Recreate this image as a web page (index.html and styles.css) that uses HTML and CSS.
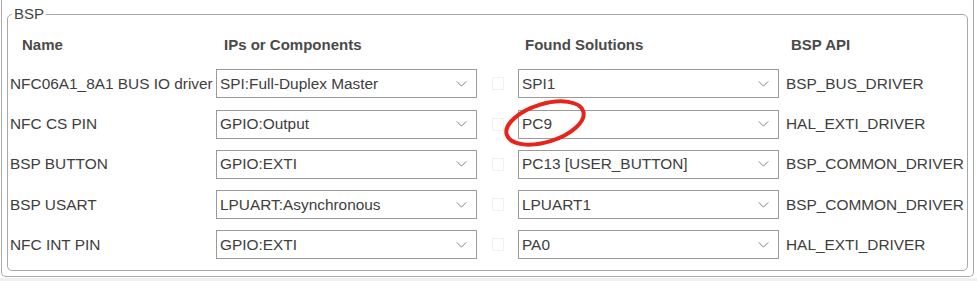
FILE: index.html
```html
<!DOCTYPE html>
<html>
<head>
<meta charset="utf-8">
<link rel="stylesheet" href="styles.css">
</head>
<body>
<div class="page">
  <div class="frame">
    <fieldset class="group">
      <legend class="group-title">BSP</legend>
      <div class="grid">
        <div class="head head-name">Name</div>
        <div class="head head-ip">IPs or Components</div>
        <div class="spacer"></div>
        <div class="head head-sol">Found Solutions</div>
        <div class="head head-api">BSP API</div>

        <div class="cell name">NFC06A1_8A1 BUS IO driver</div>
        <div class="combo"><span>SPI:Full-Duplex Master</span><svg class="chev" viewBox="0 0 12 7"><polyline points="0.5,0.5 6,6 11.5,0.5"/></svg></div>
        <div class="check"><span class="box"></span></div>
        <div class="combo"><span>SPI1</span><svg class="chev" viewBox="0 0 12 7"><polyline points="0.5,0.5 6,6 11.5,0.5"/></svg></div>
        <div class="cell api">BSP_BUS_DRIVER</div>

        <div class="cell name">NFC CS PIN</div>
        <div class="combo"><span>GPIO:Output</span><svg class="chev" viewBox="0 0 12 7"><polyline points="0.5,0.5 6,6 11.5,0.5"/></svg></div>
        <div class="check"><span class="box"></span></div>
        <div class="combo marked"><span>PC9</span><svg class="chev" viewBox="0 0 12 7"><polyline points="0.5,0.5 6,6 11.5,0.5"/></svg>
          <svg class="ring" viewBox="0 0 90 46"><ellipse cx="45" cy="23" rx="40" ry="19" transform="rotate(-17 45 23)"/></svg>
        </div>
        <div class="cell api">HAL_EXTI_DRIVER</div>

        <div class="cell name">BSP BUTTON</div>
        <div class="combo"><span>GPIO:EXTI</span><svg class="chev" viewBox="0 0 12 7"><polyline points="0.5,0.5 6,6 11.5,0.5"/></svg></div>
        <div class="check"><span class="box"></span></div>
        <div class="combo"><span>PC13 [USER_BUTTON]</span><svg class="chev" viewBox="0 0 12 7"><polyline points="0.5,0.5 6,6 11.5,0.5"/></svg></div>
        <div class="cell api">BSP_COMMON_DRIVER</div>

        <div class="cell name">BSP USART</div>
        <div class="combo"><span>LPUART:Asynchronous</span><svg class="chev" viewBox="0 0 12 7"><polyline points="0.5,0.5 6,6 11.5,0.5"/></svg></div>
        <div class="check"><span class="box"></span></div>
        <div class="combo"><span>LPUART1</span><svg class="chev" viewBox="0 0 12 7"><polyline points="0.5,0.5 6,6 11.5,0.5"/></svg></div>
        <div class="cell api">BSP_COMMON_DRIVER</div>

        <div class="cell name">NFC INT PIN</div>
        <div class="combo"><span>GPIO:EXTI</span><svg class="chev" viewBox="0 0 12 7"><polyline points="0.5,0.5 6,6 11.5,0.5"/></svg></div>
        <div class="check"><span class="box"></span></div>
        <div class="combo"><span>PA0</span><svg class="chev" viewBox="0 0 12 7"><polyline points="0.5,0.5 6,6 11.5,0.5"/></svg></div>
        <div class="cell api">HAL_EXTI_DRIVER</div>
      </div>
    </fieldset>
  </div>
</div>
</body>
</html>
```

FILE: styles.css
```css
html {
  background: #f0f0f0;
}
body {
  margin: 0;
  font-family: "Liberation Sans", Arial, sans-serif;
  font-size: 15.4px;
  color: #3e3e3e;
}
.page {
  background: #ffffff;
  width: 977px;
  height: 278px;
}
.frame {
  box-sizing: border-box;
  margin-left: 1px;
  width: 973px;
  height: 277px;
  border: 1px solid #a9a9a9;
  border-top: none;
  border-radius: 0 0 5px 5px;
  padding: 6px 5px 0 5px;
}
.group {
  margin: 0;
  padding: 0 0 0 2px;
  height: 265px;
  box-sizing: border-box;
  border: 1px solid #a9a9a9;
  border-radius: 5px;
  min-width: 0;
}
.group-title {
  margin-left: 2px;
  padding: 0 2px;
  line-height: 16px;
  font-size: 15px;
  color: #444;
}
.grid {
  display: grid;
  grid-template-columns: 206px 261px 41px 261px auto;
  grid-template-rows: 28px repeat(5, 29px);
  row-gap: 11.25px;
  align-items: center;
  margin-top: 8px;
}
.head {
  font-weight: bold;
  font-size: 15px;
  color: #4a4a4a;
}
.head-name { padding-left: 12px; }
.head-ip { padding-left: 8px; }
.head-sol { padding-left: 7px; }
.head-api { padding-left: 12px; }
.cell {
  white-space: nowrap;
}
.api {
  padding-left: 7px;
}
.combo {
  position: relative;
  box-sizing: border-box;
  height: 29px;
  border: 1px solid #9a9a9a;
  background: #fff;
  display: flex;
  align-items: center;
  justify-content: space-between;
  padding: 0 9px 0 3px;
  white-space: nowrap;
}
.chev {
  width: 11px;
  height: 6px;
  flex: none;
  fill: none;
  stroke: #7a7a7a;
  stroke-width: 1.1;
}
.check {
  display: flex;
  justify-content: center;
}
.box {
  display: block;
  width: 10px;
  height: 11px;
  border: 1px solid #f1f1f1;
}
.ring {
  position: absolute;
  left: -19px;
  top: -11px;
  width: 90px;
  height: 46px;
  fill: none;
  stroke: #e8231a;
  stroke-width: 4;
  overflow: visible;
}
```
